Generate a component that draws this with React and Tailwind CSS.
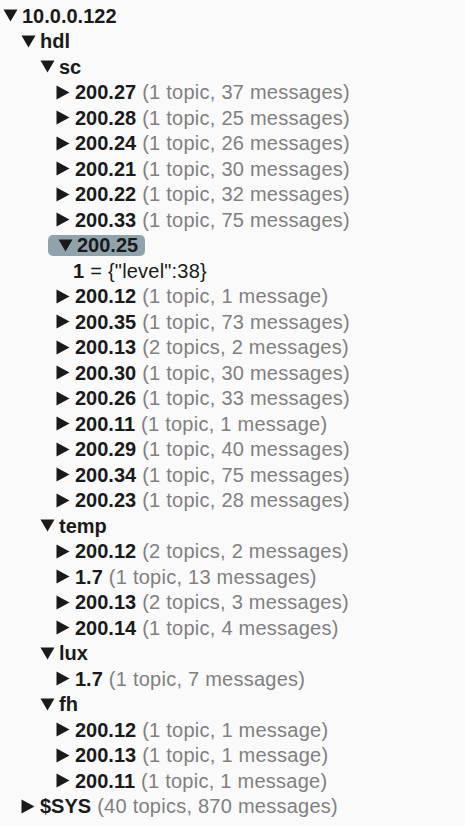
import React from "react";

const Down = () => (
  <svg width="15" height="13" viewBox="0 0 15 13" className="shrink-0">
    <polygon points="0.5,0.5 14.5,0.5 7.5,12.5" fill="#1a1a1a" />
  </svg>
);
const Right = () => (
  <svg width="14" height="15" viewBox="0 0 14 15" className="shrink-0">
    <polygon points="0.5,0.5 13.5,7.5 0.5,14.5" fill="#1a1a1a" />
  </svg>
);

const tri = ["ml-[3px]", "ml-[21px]", "ml-[40px]", "ml-[56px]"];

function Row({ level, open, name, info, highlight }) {
  return (
    <div className="flex items-center h-[25.5px]">
      <div
        className={
          "flex items-center " +
          (highlight
            ? "ml-[48px] bg-[#8fa3ad] rounded-[5px] pl-[10px] pr-[7px] h-[21px]"
            : tri[level])
        }
      >
        <div className="w-[19px] flex items-center">{open ? <Down /> : <Right />}</div>
        <span className="font-bold text-[#1a1a1a]">{name}</span>
      </div>
      {info && <span className="ml-[6px] text-[#808080] tracking-[0.25px]">({info})</span>}
    </div>
  );
}

const sc = [
  ["200.27", "1 topic, 37 messages"],
  ["200.28", "1 topic, 25 messages"],
  ["200.24", "1 topic, 26 messages"],
  ["200.21", "1 topic, 30 messages"],
  ["200.22", "1 topic, 32 messages"],
  ["200.33", "1 topic, 75 messages"],
];
const sc2 = [
  ["200.12", "1 topic, 1 message"],
  ["200.35", "1 topic, 73 messages"],
  ["200.13", "2 topics, 2 messages"],
  ["200.30", "1 topic, 30 messages"],
  ["200.26", "1 topic, 33 messages"],
  ["200.11", "1 topic, 1 message"],
  ["200.29", "1 topic, 40 messages"],
  ["200.34", "1 topic, 75 messages"],
  ["200.23", "1 topic, 28 messages"],
];
const temp = [
  ["200.12", "2 topics, 2 messages"],
  ["1.7", "1 topic, 13 messages"],
  ["200.13", "2 topics, 3 messages"],
  ["200.14", "1 topic, 4 messages"],
];
const lux = [["1.7", "1 topic, 7 messages"]];
const fh = [
  ["200.12", "1 topic, 1 message"],
  ["200.13", "1 topic, 1 message"],
  ["200.11", "1 topic, 1 message"],
];

export default function App() {
  const leaves = (arr) => arr.map(([n, i], k) => <Row key={n + k} level={3} name={n} info={i} />);
  return (
    <div
      className="w-[465px] h-[826px] bg-[#fafafa] pt-[3px] text-[20px] overflow-hidden"
      style={{ fontFamily: '"Liberation Sans", Arial, sans-serif' }}
    >
      <Row level={0} open name="10.0.0.122" />
      <Row level={1} open name="hdl" />
      <Row level={2} open name="sc" />
      {leaves(sc)}
      <Row level={3} open name="200.25" highlight />
      <div className="flex items-center h-[25.5px] ml-[73px] text-[#1a1a1a] tracking-[0.2px]">
        <span className="font-bold">1</span>
        <span className="ml-[6px]">= {'{"level":38}'}</span>
      </div>
      {leaves(sc2)}
      <Row level={2} open name="temp" />
      {leaves(temp)}
      <Row level={2} open name="lux" />
      {leaves(lux)}
      <Row level={2} open name="fh" />
      {leaves(fh)}
      <Row level={1} name="$SYS" info="40 topics, 870 messages" />
    </div>
  );
}
